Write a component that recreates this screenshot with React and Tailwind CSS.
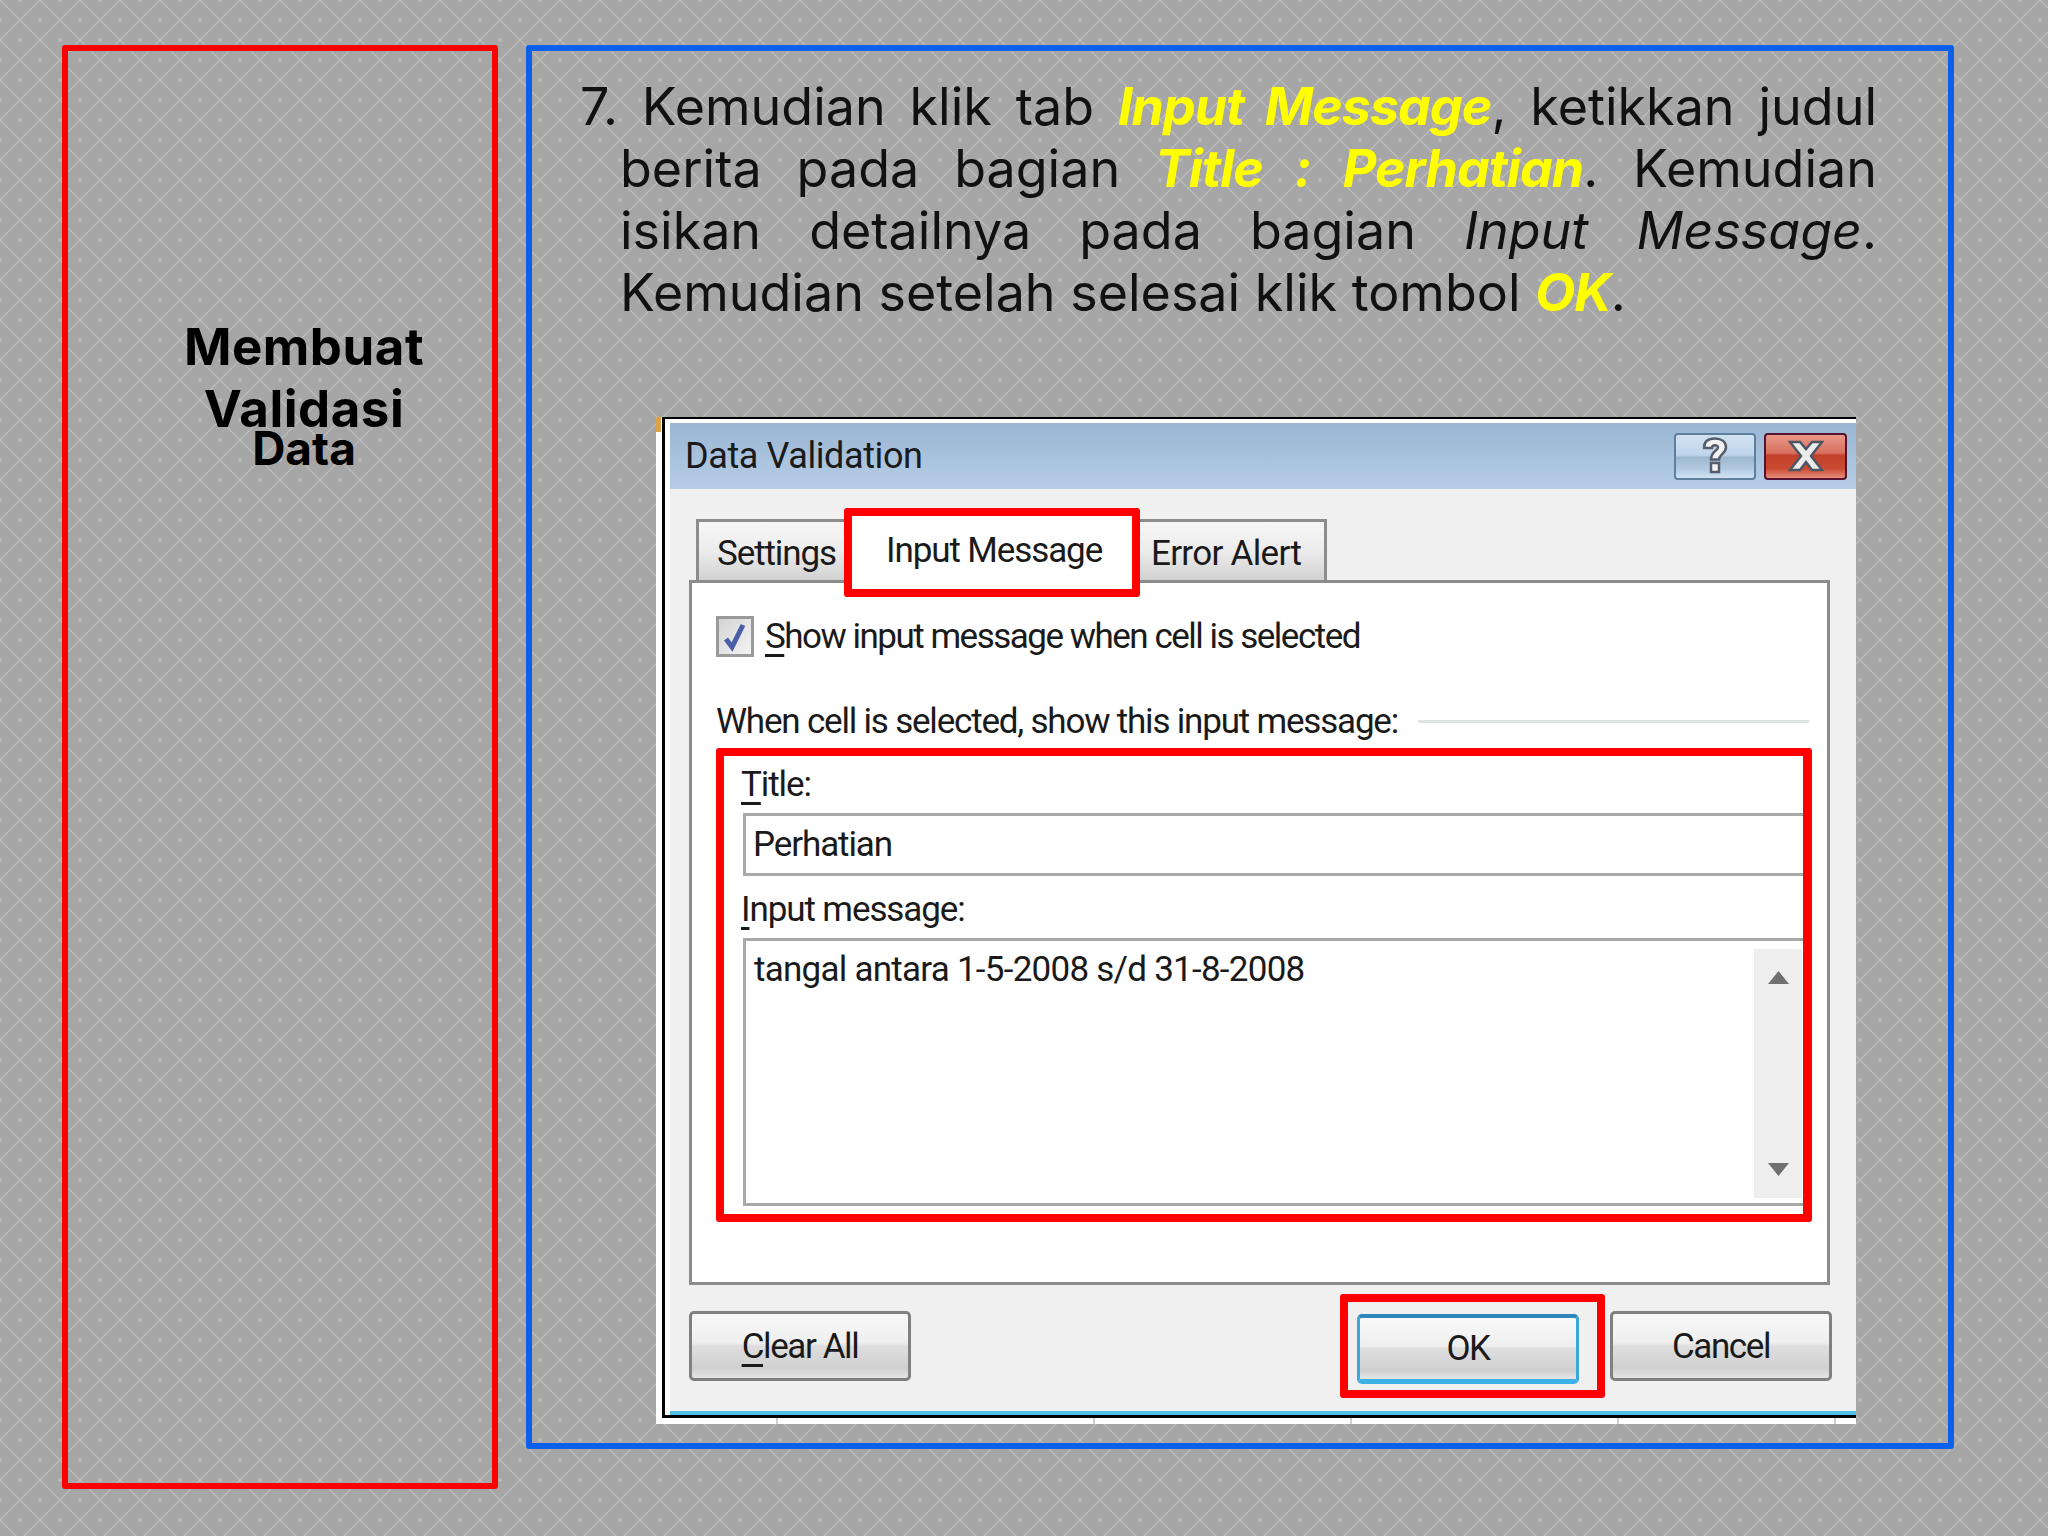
import React from 'react';

const tile = "bg-[url('data:image/svg+xml,%3Csvg%20xmlns=%22http://www.w3.org/2000/svg%22%20width=%2240%22%20height=%2240%22%3E%3Cpath%20d=%22M0%200L40%2040M40%200L0%2040%22%20stroke=%22%23bfbfbf%22%20stroke-width=%221.2%22/%3E%3Cg%20fill=%22%23bababa%22%3E%3Ccircle%20cx=%2220%22%20cy=%220%22%20r=%222%22/%3E%3Ccircle%20cx=%2220%22%20cy=%2240%22%20r=%222%22/%3E%3Ccircle%20cx=%220%22%20cy=%2220%22%20r=%222%22/%3E%3Ccircle%20cx=%2240%22%20cy=%2220%22%20r=%222%22/%3E%3C/g%3E%3C/svg%3E')]";

const Hl = ({ children }) => <span className="font-bold italic text-[#ffff00] tracking-[-1px]">{children}</span>;

const Key = ({ children }) => (
    <u className="decoration-[3px] underline-offset-[6px]">{children}</u>
);

const DialogButton = ({ children, focused }) => (
    <button
        className={`w-[222px] h-[70px] shrink-0 rounded-[5px] tracking-[-1.400px] bg-[linear-gradient(#f8f8f8_0%,#efefef_45%,#dedede_50%,#d0d0d0_85%,#e4e4e4_100%)] ${focused ? 'border-x-[3px] border-x-[#3aa6dc] border-t-[4px] border-t-[#2f86bd] border-b-[5px] border-b-[#3bb2e6]' : 'border-[3px] border-[#808080]'}`}
    >
        {children}
    </button>
);

const Field = ({ className, children }) => (
    <div className={`ml-[19px] border-l-[3px] border-t-[3px] border-b-[3px] border-[#a9a9a9] ${className}`}>
        {children}
    </div>
);

const App = () => {
    return (
        <div className={`w-[2048px] h-[1536px] overflow-hidden bg-[#a6a6a6] ${tile} flex items-start gap-[28px] pt-[45px] pl-[62px] font-['Roboto',sans-serif]`}>
            {/* left title */}
            <div className="w-[436px] h-[1444px] shrink-0 border-[6px] border-[#ff0000] rounded-[3px] flex flex-col items-center pl-[48px] pt-[265px] font-['Inter',sans-serif] font-bold text-black">
                <div className="text-[51px] leading-[62px] tracking-[0.5px]">Membuat</div>
                <div className="text-[51px] leading-[62px] tracking-[0.5px]">Validasi</div>
                <div className="text-[46px] leading-[30px] -mt-[7px]">Data</div>
            </div>

            {/* right content */}
            <div className="w-[1428px] h-[1404px] shrink-0 border-[6px] border-[#0b5fe8] rounded-[3px] flex flex-col">
                <div className="pl-[48px] pr-[71px] pt-[25px] text-[52px] leading-[62px] text-[#111] font-['Inter',sans-serif]">
                    <div className="pl-[40px] -indent-[40px] [text-align-last:justify]">
                        7. Kemudian klik tab <Hl>Input Message</Hl>, ketikkan judul
                    </div>
                    <div className="pl-[40px] [text-align-last:justify]">
                        berita pada bagian <Hl>Title : Perhatian</Hl>. Kemudian
                    </div>
                    <div className="pl-[40px] [text-align-last:justify]">
                        isikan detailnya pada bagian <span className="italic">Input Message</span>.
                    </div>
                    <div className="pl-[40px]">
                        Kemudian setelah selesai klik tombol <Hl>OK</Hl>.
                    </div>
                </div>

                {/* dialog screenshot */}
                <div className="relative ml-[124px] mt-[93px] w-[1200px] h-[1007px] bg-white flex flex-col text-[#1a1a1a] text-[35px] leading-[49px] tracking-[-1.1px]">
                    <div className="absolute left-0 top-0 w-[5px] h-[15px] bg-[#d9a24a]" />
                    <div className="flex-1 ml-[6px] border-l-[3px] border-t-[2px] border-b-[3px] border-black bg-white pt-[4px] pl-[5px] flex flex-col min-h-0">
                        <div className="h-[66px] shrink-0 bg-gradient-to-b from-[#9ab6d3] to-[#b6cde6] flex items-center pl-[15px] pr-[9px]">
                            <span className="text-[36px] tracking-[-0.4px] flex-1">Data Validation</span>
                            <div className="flex gap-[8px]">
                                <div className="w-[82px] h-[47px] rounded-[4px] border-2 border-[#5f7f9f] bg-[linear-gradient(#d2e2f3_0%,#bfd4ea_47%,#9db7cf_52%,#b2cae2_80%,#d2e3f5_100%)] flex items-center justify-center">
                                    <svg width="28" height="38" viewBox="0 0 28 38">
                                        <path d="M3 11C3 4 8 1.500 14 1.500s11 3 11 9c0 6-7 7-7 12h-8c0-8 7-9 7-12 0-3-6-3-6 .5z" fill="#f2f2f2" stroke="#555d6b" strokeWidth="2.5" />
                                        <rect x="10" y="26" width="8" height="9" fill="#f2f2f2" stroke="#555d6b" strokeWidth="2.500" />
                                    </svg>
                                </div>
                                <div className="w-[83px] h-[47px] rounded-[4px] border-2 border-[#571230] bg-[linear-gradient(#e8998a_0%,#d9705f_42%,#c3412a_47%,#c94a32_78%,#e78d7d_100%)] flex items-center justify-center">
                                    <svg width="36" height="32" viewBox="0 0 36 32">
                                        <path d="M2 2h10l6 7 6-7h10L23 16l11 14H24l-6-8-6 8H2l11-14z" fill="#ececec" stroke="#4f5563" strokeWidth="2.5" />
                                    </svg>
                                </div>
                            </div>
                        </div>

                        <div className="flex-1 min-h-0 bg-[#f0f0f0] border-b-[4px] border-[#4fc0e6] pl-[19px] flex flex-col">
                            {/* tabs */}
                            <div className="flex items-end pl-[7px] pt-[19px]">
                                <div className="w-[148px] h-[62px] border-l-[3px] border-t-[3px] border-[#8c8c8c] bg-[linear-gradient(#f6f6f6_0%,#ececec_50%,#d0d0d0_100%)] pl-[18px] pt-[7px]">
                                    Settings
                                </div>
                                <div className="relative z-10 w-[296px] h-[89px] -mb-[16px] rounded-[3px] border-[8px] border-[#ff0000] bg-white pl-[34px] pt-[10px]">
                                    Input Message
                                </div>
                                <div className="w-[187px] h-[62px] border-r-[3px] border-t-[3px] border-[#8c8c8c] bg-[linear-gradient(#f6f6f6_0%,#ececec_50%,#d0d0d0_100%)] pl-[11px] pt-[7px] tracking-[-0.7px]">
                                    Error Alert
                                </div>
                            </div>

                            {/* panel */}
                            <div className="w-[1141px] h-[705px] -mt-[1px] shrink-0 border-[3px] border-[#8c8c8c] bg-white pl-[24px] pt-[33px]">
                                <div className="flex items-center gap-[11px] h-[41px]">
                                    <div className="w-[38px] h-[41px] border-[3px] border-[#9a9a9a] bg-gradient-to-br from-[#d4d4d4] to-[#f4f4f4] flex items-center justify-center">
                                        <svg width="26" height="30" viewBox="0 0 26 30">
                                            <path d="M4 17l6 8L21 3" fill="none" stroke="#4a5ea8" strokeWidth="5" />
                                        </svg>
                                    </div>
                                    <span className="tracking-[-1.5px]"><Key>S</Key>how input message when cell is selected</span>
                                </div>

                                <div className="flex items-center h-[40px] mt-[44px]">
                                    <span className="tracking-[-1.2px]">When cell is selected, show this input message:</span>
                                    <div className="ml-[20px] w-[391px] h-[3px] bg-[#dfe3e3]" />
                                </div>

                                {/* highlighted fields */}
                                <div className="mt-[7px] w-[1096px] h-[474px] rounded-[3px] border-[8px] border-r-[9px] border-[#ff0000] flex flex-col">
                                    <div className="h-[40px] mt-[4px] pl-[17px]"><Key>T</Key>itle:</div>
                                    <Field className="mt-[13px] h-[63px] pl-[7px] flex items-center">Perhatian</Field>
                                    <div className="h-[40px] mt-[9px] pl-[17px]"><Key>I</Key>nput message:</div>
                                    <Field className="mt-[13px] flex-1 mb-[8px] pl-[8px] pt-[2px] flex justify-between">
                                        <span className="pt-[2px] tracking-[-0.75px]">tangal antara 1-5-2008 s/d 31-8-2008</span>
                                        <div className="w-[48px] mt-[6px] mb-[5px] mr-[1px] bg-[#eeeeee] flex flex-col items-center justify-between py-[22px]">
                                            <svg width="21" height="13" viewBox="0 0 21 13"><path d="M10.500 0L21 13H0z" fill="#707070" /></svg>
                                            <svg width="21" height="13" viewBox="0 0 21 13"><path d="M0 0h21L10.500 13z" fill="#707070" /></svg>
                                        </div>
                                    </Field>
                                </div>
                            </div>

                            {/* buttons */}
                            <div className="mt-[9px] w-[1143px] h-[104px] flex items-center justify-between">
                                <DialogButton><Key>C</Key>lear All</DialogButton>
                                <div className="flex items-center gap-[5px]">
                                    <div className="w-[265px] h-[104px] rounded-[3px] border-[8px] border-[#ff0000] pl-[9px] pt-[12px]">
                                        <div className="w-[220px]">
                                            <DialogButton focused>OK</DialogButton>
                                        </div>
                                    </div>
                                    <DialogButton>Cancel</DialogButton>
                                </div>
                            </div>
                        </div>
                    </div>
                    {/* bottom strip of the screenshot, cell edges show through */}
                    <div className="h-[6px] ml-[6px] shrink-0 flex">
                        <div className="w-[116px] border-r-2 border-[#cfcfcf]" />
                        <div className="w-[317px] border-r-2 border-[#cfcfcf]" />
                        <div className="w-[257px] border-r-2 border-[#cfcfcf]" />
                        <div className="w-[267px] border-r-2 border-[#cfcfcf]" />
                        <div className="w-[217px] border-r-2 border-[#cfcfcf]" />
                    </div>
                </div>
            </div>
        </div>
    );
};

export default App;
